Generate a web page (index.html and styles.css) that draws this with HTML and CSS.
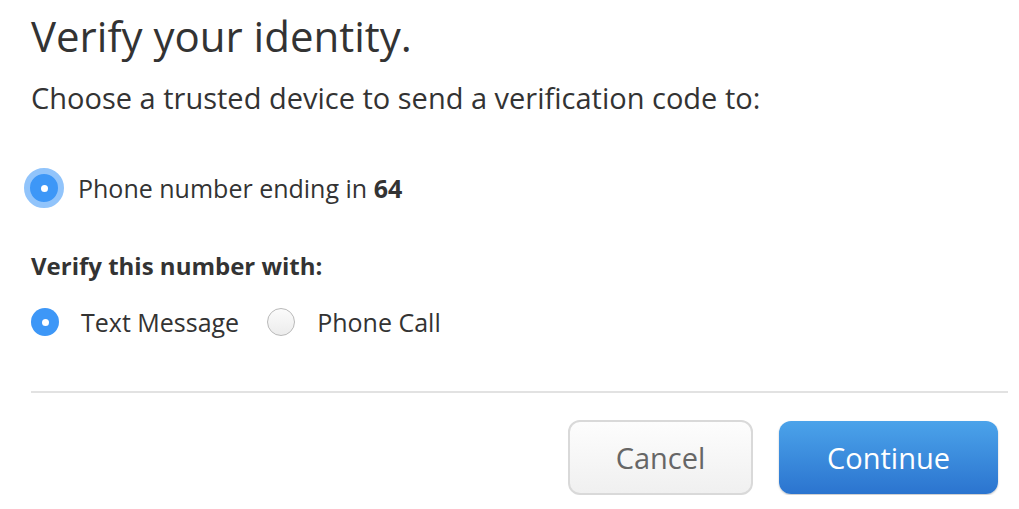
FILE: index.html
```html
<!DOCTYPE html>
<html lang="en">
<head>
    <meta charset="UTF-8">
    <meta name="viewport" content="width=device-width, initial-scale=1.0">
    <title>Verify your identity</title>
    <link rel="stylesheet" href="styles.css">
</head>
<body>
    <div class="dialog">
        <h1 class="title">Verify your identity.</h1>
        <p class="subtitle">Choose a trusted device to send a verification code to:</p>

        <label class="device">
            <span class="radio radio-focus"><span class="dot"></span></span>
            <span>Phone number ending in <b>64</b></span>
        </label>

        <h2 class="method-title">Verify this number with:</h2>
        <div class="methods">
            <label class="method">
                <span class="radio radio-on"><span class="dot"></span></span>
                <span>Text Message</span>
            </label>
            <label class="method">
                <span class="radio radio-off"></span>
                <span>Phone Call</span>
            </label>
        </div>

        <div class="footer">
            <button class="btn btn-cancel">Cancel</button>
            <button class="btn btn-continue">Continue</button>
        </div>
    </div>
</body>
</html>
```

FILE: styles.css
```css
body {
    margin: 0;
    background: #fff;
    color: #333;
    font-family: "Open Sans", "Noto Sans", sans-serif;
}
.dialog {
    padding: 10px 11px 0 31px;
}
.title {
    margin: 0;
    font-size: 42px;
    font-weight: 400;
    line-height: 52px;
}
.subtitle {
    margin: 18px 0 0;
    font-size: 29px;
    line-height: 36px;
}
.device {
    display: flex;
    align-items: center;
    gap: 14px;
    margin: 52px 0 0 -7px;
    font-size: 25px;
    line-height: 40px;
}
.device b {
    font-weight: 700;
}
.radio {
    display: inline-flex;
    align-items: center;
    justify-content: center;
    box-sizing: border-box;
    width: 28px;
    height: 28px;
    border-radius: 50%;
    flex-shrink: 0;
}
.radio-focus {
    width: 40px;
    height: 40px;
    background: #3d97f7;
    border: 6px solid #91c4fb;
}
.radio-on {
    background: #3d97f7;
}
.radio-off {
    background: linear-gradient(#fbfbfb, #ececec);
    border: 1px solid #b9b9b9;
}
.dot {
    width: 7px;
    height: 7px;
    border-radius: 50%;
    background: #fff;
}
.method-title {
    margin: 43px 0 0;
    font-size: 24px;
    font-weight: 700;
    line-height: 30px;
}
.methods {
    display: flex;
    gap: 28px;
    margin-top: 24px;
}
.method {
    display: flex;
    align-items: center;
    gap: 22px;
    font-size: 25px;
    line-height: 34px;
}
.footer {
    display: flex;
    justify-content: flex-end;
    gap: 26px;
    margin-top: 52px;
    padding: 27px 10px 0 0;
    border-top: 2px solid #e2e2e2;
}
.btn {
    font-family: inherit;
    font-size: 29px;
    border-radius: 12px;
    cursor: pointer;
}
.btn-cancel {
    width: 185px;
    height: 75px;
    color: #666;
    background: linear-gradient(#fdfdfd, #f0f0f0);
    border: 2px solid #d9d9d9;
}
.btn-continue {
    width: 219px;
    height: 73px;
    margin-top: 1px;
    color: #fff;
    background: linear-gradient(#4ba3ea, #2b74cf);
    border: none;
    box-shadow: 0 1px 2px rgba(0, 0, 0, 0.25);
}
```
